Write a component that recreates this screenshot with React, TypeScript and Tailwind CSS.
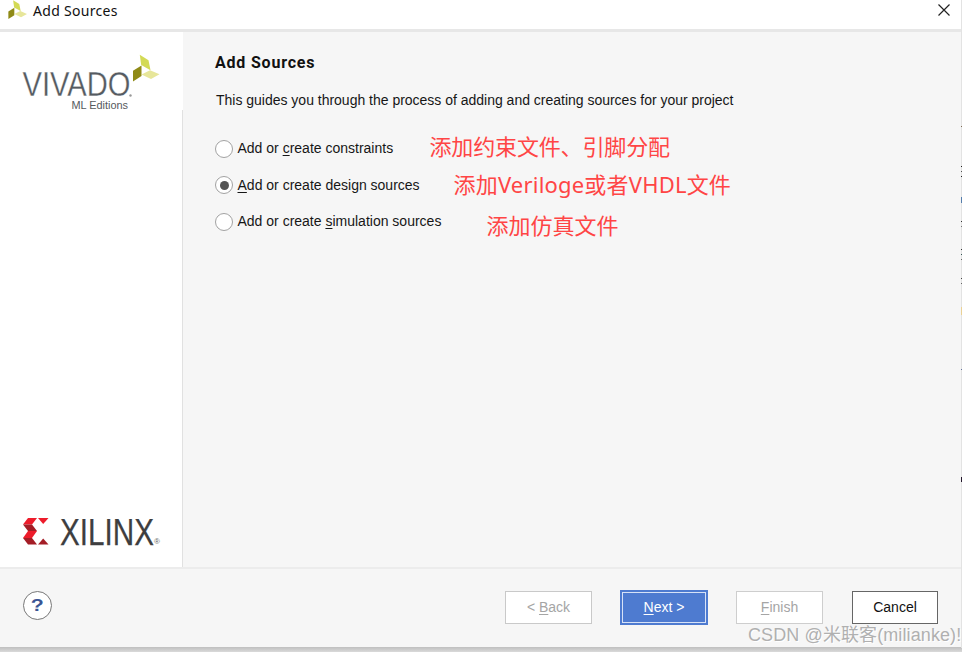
import type { ReactNode } from "react";

function Petals() {
  return (
    <>
      <path d="M7.3 .2 L16 5.800 L18 15.800 L8.700 10.500 Z" fill="#d3da55" />
      <path d="M.5 16.200 L9 11 L9 21.500 L.5 27 Z" fill="#8f8a16" />
      <path d="M9 20 L17.500 15.800 L27 19.800 L18.500 24.500 Z" fill="#e7e69a" />
    </>
  );
}

function Option({ checked, children, note, noteClass }: { checked?: boolean; children: ReactNode; note: string; noteClass: string }) {
  return (
    <div className="flex h-[36.600px] items-center">
      <span className="flex size-[18px] shrink-0 items-center justify-center rounded-full border-[1.500px] border-[#a2a2a2] bg-white">
        {checked && <span className="size-[9px] rounded-full bg-[#555]" />}
      </span>
      <span className="ml-[4.500px] w-[192px] whitespace-nowrap text-[14px] text-[#161616]">{children}</span>
      <span className={`whitespace-nowrap font-['Noto_Sans','Noto_Sans_CJK_SC',sans-serif] text-[22px] leading-none text-[#ff4545] ${noteClass}`}>{note}</span>
    </div>
  );
}

function Key({ children }: { children: ReactNode }) {
  return <span className="underline decoration-1 underline-offset-2">{children}</span>;
}

const edgeMarks = [
  "mt-[126px] bg-[#7e6b54]",
  "mt-[39px] bg-[#222]",
  "mt-[4px] bg-[#555]",
  "mt-[4px] bg-[#222]",
  "mt-[20px] h-[6px] bg-[#557dab]",
  "mt-[18px] bg-[#333]",
  "mt-[4px] bg-[#777]",
  "mt-[22px] bg-[#333]",
  "mt-[4px] bg-[#355]",
  "mt-[4px] bg-[#666]",
  "mt-[18px] bg-[#444]",
  "mt-[4px] bg-[#666]",
  "mt-[23px] h-[8px] bg-[#ead195]",
  "mt-[54px] bg-[#64739b]",
  "mt-[107px] h-[5px] bg-[#24182c]",
];

export default function App() {
  return (
    <div className="relative flex h-[652px] w-[962px] flex-col overflow-hidden bg-[#f6f6f6] font-['Liberation_Sans',Arial,sans-serif]">
      <header className="flex h-[32px] shrink-0 items-start border-b-[3px] border-[#e7e7e7] bg-white pl-[8px] pr-[12px]">
        <svg viewBox="0 0 27 27" className="size-[19px]" aria-hidden="true">
          <Petals />
        </svg>
        <span className="ml-[6px] mt-px font-['Noto_Sans',sans-serif] text-[14px] leading-[20px] tracking-[0.300px] text-[#111]">Add Sources</span>
        <svg viewBox="0 0 12 12" className="ml-auto mt-[4px] size-[12px]" stroke="#222" strokeWidth="1.2">
          <path d="M.5 .5 L11.5 11.5 M11.5 .5 L.5 11.5" />
        </svg>
      </header>
      <main className="flex h-[535px] shrink-0">
        <aside className="flex w-[183px] shrink-0 flex-col bg-white">
          <div className="h-[78px]">
            <svg width="183" height="78" viewBox="0 32 183 78">
              <text x="22.500" y="96.200" fontSize="35" textLength="108" lengthAdjust="spacingAndGlyphs" fill="#555b61" stroke="#fff" strokeWidth=".3" fontFamily="Liberation Sans, sans-serif">VIVADO</text>
              <circle cx="130.500" cy="95.500" r="1.2" fill="#999" />
              <text x="71.500" y="109" fontSize="11.500" textLength="56.500" lengthAdjust="spacingAndGlyphs" fill="#55595d" fontFamily="Liberation Sans, sans-serif">ML Editions</text>
              <g transform="translate(132.500 54.500)">
                <Petals />
              </g>
            </svg>
          </div>
          <div className="flex flex-1 items-end border-r border-[#e1e1e1]">
            <svg width="182" height="60" viewBox="0 507 182 60">
              <path d="M28 518 H37 L32 524.500 H23 Z" fill="#ed1c2b" />
              <path d="M23 524.500 H32 L37 531 H28 Z" fill="#a41d26" />
              <path d="M28 531 H37 L32 538 H23 Z" fill="#ed1c2b" />
              <path d="M23 538 H32 L37 544.500 H28 Z" fill="#a41d26" />
              <path d="M38 518 H48.500 L43.200 524 Z" fill="#ed1c2b" />
              <path d="M38 544.500 L43.200 538.500 L48.500 544.500 Z" fill="#a41d26" />
              <text x="60" y="544.500" fontSize="37.500" textLength="94" lengthAdjust="spacingAndGlyphs" fill="#3e3e40" stroke="#3e3e40" strokeWidth=".25" fontFamily="Liberation Sans, sans-serif">XILINX</text>
              <text x="154" y="544" fontSize="8" fill="#666" fontFamily="Liberation Sans, sans-serif">®</text>
            </svg>
          </div>
        </aside>
        <section className="flex-1 pl-[32px] pt-[21px]">
          <h1 className="font-['Roboto',sans-serif] text-[16px] font-bold leading-[20px] tracking-[0.800px] text-[#111]">Add Sources</h1>
          <p className="ml-px mt-[17px] whitespace-nowrap text-[14px] leading-[20px] tracking-[-0.010px] text-[#161616]">This guides you through the process of adding and creating sources for your project</p>
          <div className="mt-[20.500px]">
            <Option note="添加约束文件、引脚分配" noteClass="-mt-[6px] tracking-[-0.150px]">Add or <Key>c</Key>reate constraints</Option>
            <Option checked note="添加Veriloge或者VHDL文件" noteClass="-mt-[2px] ml-[24px] tracking-[0.200px]"><Key>A</Key>dd or create design sources</Option>
            <Option note="添加仿真文件" noteClass="ml-[57px] mt-[7px]">Add or create <Key>s</Key>imulation sources</Option>
          </div>
        </section>
      </main>
      <footer className="flex h-[80px] shrink-0 items-start border-t-2 border-[#ececec] pl-[23px] pr-[24px] pt-[22px] text-[14px]">
        <button className="flex size-[29px] items-center justify-center rounded-full border-[1.500px] border-[#777] bg-white text-[17px] font-bold text-[#3a5594]"><span className="scale-x-125">?</span></button>
        <div className="ml-auto flex items-start">
          <button className="h-[33px] w-[87px] border border-[#c9c9c9] bg-white text-[#a5a5a5]">&lt; <Key>B</Key>ack</button>
          <button className="-mt-px ml-[28px] h-[35px] w-[88px] bg-[#4e7bd0] p-[2px] text-white"><span className="flex h-full items-center justify-center border border-[#d7e2f7]"><span><Key>N</Key>ext &gt;</span></span></button>
          <button className="ml-[28px] h-[33px] w-[87px] border border-[#cecece] bg-white text-[#a5a5a5]"><Key>F</Key>inish</button>
          <button className="ml-[29px] h-[33px] w-[86px] border border-[#666] bg-white text-[#111]">Cancel</button>
        </div>
      </footer>
      <div className="h-[5px] shrink-0 bg-linear-to-b from-[#bfbfbf] to-[#dadada]" />
      <div className="absolute right-0 top-0 flex h-[648px] w-px flex-col bg-[#e3e3e3]">
        {edgeMarks.map((m, i) => (
          <span key={i} className={`min-h-px w-px shrink-0 ${m}`} />
        ))}
      </div>
      <span className="absolute left-[748px] top-[623px] whitespace-nowrap font-['Liberation_Sans','Noto_Sans_CJK_SC',sans-serif] text-[18px] leading-[24px] tracking-[0.100px] text-[#b0b0b0] [text-shadow:1px_1px_0_#fff]">CSDN @米联客(milianke)!</span>
    </div>
  );
}
